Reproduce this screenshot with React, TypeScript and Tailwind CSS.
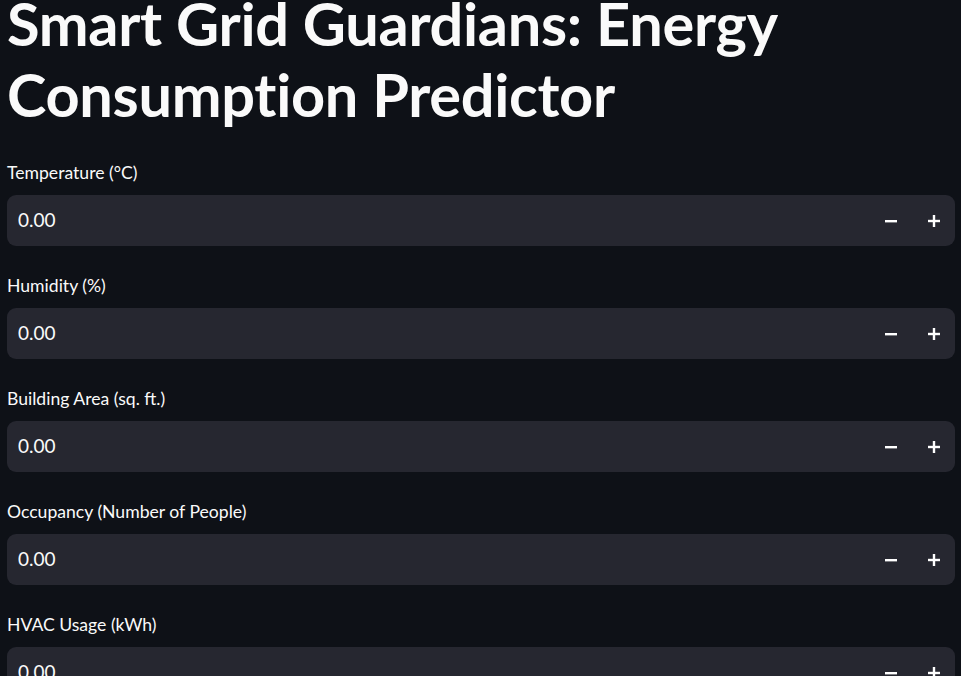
import React, { useState } from 'react';

const fields = [
  'Temperature (°C)',
  'Humidity (%)',
  'Building Area (sq. ft.)',
  'Occupancy (Number of People)',
  'HVAC Usage (kWh)',
];

const NumberField: React.FC<{ label: string }> = ({ label }) => {
  const [value, setValue] = useState(0);
  return (
    <div className="mb-[29px]">
      <label className="block h-[22px] text-[17.6px] leading-[22px] text-[#fafafa] mb-[11px]">{label}</label>
      <div className="flex items-center h-[51px] bg-[#262730] rounded-[9px]">
        <input
          className="flex-1 min-w-0 bg-transparent outline-none pl-[11px] text-[19px] text-[#fafafa]"
          value={value.toFixed(2)}
          onChange={(e) => setValue(parseFloat(e.target.value) || 0)}
        />
        <button
          onClick={() => setValue(value - 0.01)}
          className="w-[43px] h-full flex items-center justify-center text-white"
        >
          <svg width="12" height="12" viewBox="0 0 12 12"><rect x="0" y="5" width="12" height="2.4" fill="currentColor" /></svg>
        </button>
        <button
          onClick={() => setValue(value + 0.01)}
          className="w-[43px] h-full flex items-center justify-center text-white"
        >
          <svg width="12" height="12" viewBox="0 0 12 12">
            <rect x="0" y="4.8" width="12" height="2.4" fill="currentColor" />
            <rect x="4.8" y="0" width="2.4" height="12" fill="currentColor" />
          </svg>
        </button>
      </div>
    </div>
  );
};

export default function App() {
  return (
    <div className="h-screen bg-[#0e1117] text-[#fafafa] pl-[7px] pr-[6px] overflow-hidden" style={{ fontFamily: 'Lato, "Noto Sans", sans-serif' }}>
      <h1 className="text-[59.5px] leading-[71px] font-bold mt-[-12px] mb-[32px] tracking-[-0.3px]">
        Smart Grid Guardians: Energy Consumption Predictor
      </h1>
      {fields.map((f) => (
        <NumberField key={f} label={f} />
      ))}
    </div>
  );
}
